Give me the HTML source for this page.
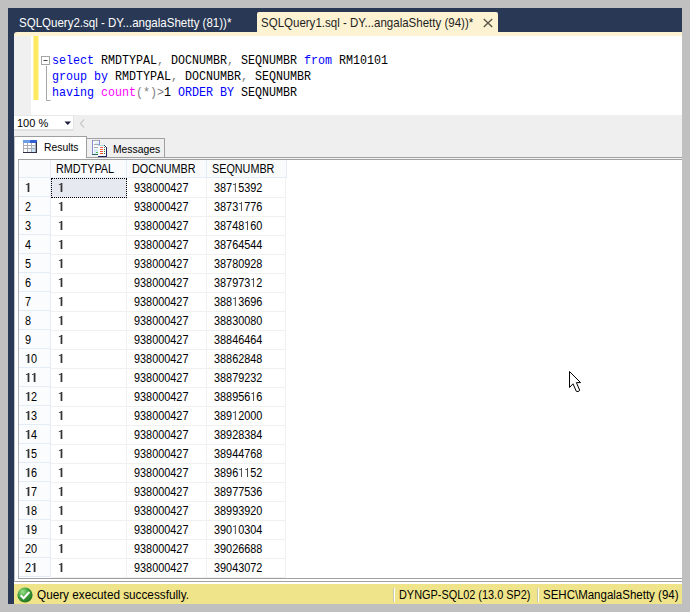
<!DOCTYPE html>
<html><head><meta charset="utf-8">
<style>
*{margin:0;padding:0;box-sizing:border-box}
html,body{width:690px;height:612px;overflow:hidden;background:#c0c0c0;font-family:"Liberation Sans",sans-serif}
.abs{position:absolute}
#win{position:absolute;left:8px;top:8px;width:674px;height:596px;background:#293955}
.tabtxt{font-size:12.4px;transform-origin:0 0;white-space:nowrap;line-height:14px}
#tab1{left:19px;top:16px;transform:scaleX(0.93);color:#fff}
#tab2{left:257px;top:12px;width:241px;height:20px;background:#fdf3d3;border-radius:2px 2px 0 0}
#tab2 .tabtxt{position:absolute;left:4px;top:4px;transform:scaleX(0.929);color:#1e1e1e}
#cream{left:14px;top:32px;width:668px;height:4px;background:#fdf3d3;border-radius:3px 0 0 0}
#editor{left:14px;top:36px;width:668px;height:79px;background:#fff}
#margin{left:14px;top:36px;width:17px;height:79px;background:#f0f0f0}
#chg{left:33px;top:36px;width:6px;height:64px;background:linear-gradient(to right,#fff2a0 0,#fff2a0 1px,#ffe862 1px,#ffe862 4px,#ffec5c 4px,#ffec5c 5px,#fff6b8 5px)}
.code{font-family:"Liberation Mono",monospace;font-size:13px;line-height:16px;white-space:pre;transform:scaleX(0.8974);transform-origin:0 0}
.kw{color:#0000ff}.gr{color:#808080}.fn{color:#ff00ff}
#gray{left:14px;top:115px;width:668px;height:469px;background:#efefef}
#zoom{left:14px;top:115px;width:60px;height:14px;background:#fff;border-top:1px solid #e8e8e8;border-right:1px solid #e4e4e4}
#zoomsh{left:14px;top:129px;width:60px;height:2px;background:#e2e2e2}
#panel{left:14px;top:157px;width:668px;height:425px;background:#fff;border-left:1px solid #c4c4c4;border-bottom:1px solid #a0a0a0}
#tabline{left:86px;top:157px;width:596px;height:1px;background:#a0a0a0;border-bottom:1px solid #f4f4f4;box-sizing:content-box}
#gridbox{left:18px;top:159px;width:664px;height:420px;border-left:1px solid #aeaeb4;border-top:1px solid #a0a0a4;border-bottom:1px solid #a0a0a4;background:#fff}
#restab{left:14px;top:136px;width:73px;height:23px;background:#fff;border:1px solid #a0a0a0;border-left-color:#c4c4c4;border-bottom:none}
#msgtab{left:86px;top:138px;width:79px;height:19px;background:#f0f0f0;border:1px solid #a0a0a0;border-bottom:none}
.gt{font-size:11px;line-height:13px;white-space:nowrap;color:#000}
.gh{font-size:12px;line-height:14px;transform:scaleX(0.90);transform-origin:0 0}
.gd{font-size:12.5px;line-height:14px;transform:scaleX(0.87);transform-origin:0 0}
.o{display:inline-block;width:0.556em;height:9px;position:relative;vertical-align:baseline}
.o::before{content:'';position:absolute;left:3.45px;bottom:0;width:1.15px;height:9px;background:#333}
.o::after{content:'';position:absolute;left:1.15px;top:1px;width:2.4px;height:1px;background:#555}
#status{left:14px;top:584px;width:668px;height:20px;background:#efe48a}
.st{font-size:12.5px;transform-origin:0 0;line-height:14px;white-space:nowrap;color:#000;position:absolute;top:3px}
</style></head><body>
<div id="win"></div>
<div class="abs tabtxt" id="tab1">SQLQuery2.sql - DY...angalaShetty (81))*</div>
<div class="abs" id="tab2"><div class="tabtxt">SQLQuery1.sql - DY...angalaShetty (94))*</div>
<svg class="abs" style="left:226px;top:6px" width="10" height="10" viewBox="0 0 10 10"><path d="M0.8 1L9.2 8.9M9.2 1L0.8 8.9" stroke="#5a5548" stroke-width="1.4"/></svg></div>
<div class="abs" id="cream"></div>
<div class="abs" id="editor"></div>
<div class="abs" id="margin"></div>
<div class="abs" id="chg"></div>
<svg class="abs" style="left:40px;top:55px" width="12" height="46" viewBox="0 0 12 46">
<rect x="1.5" y="1.5" width="8" height="8" fill="#fff" stroke="#a5a5a5"/>
<path d="M3.5 5.5H7.5" stroke="#444"/>
<path d="M6.5 11V45.5H10.5" fill="none" stroke="#a5a5a5"/>
</svg>
<div class="abs code" style="left:52px;top:53px"><span class="kw">select</span> RMDTYPAL<span class="gr">,</span> DOCNUMBR<span class="gr">,</span> SEQNUMBR <span class="kw">from</span> RM10101
<span class="kw">group</span> <span class="kw">by</span> RMDTYPAL<span class="gr">,</span> DOCNUMBR<span class="gr">,</span> SEQNUMBR
<span class="kw">having</span> <span class="fn">count</span><span class="gr">(*)&gt;</span>1 <span class="kw">ORDER</span> <span class="kw">BY</span> SEQNUMBR</div>
<div class="abs" id="gray"></div>
<div class="abs" id="zoom"></div>
<div class="abs" id="zoomsh"></div>
<div class="abs gt" style="left:17px;top:117px">100 %</div>
<svg class="abs" style="left:64px;top:121px" width="8" height="5"><path d="M0.5 0.5H7L3.75 4z" fill="#1e1e3c"/></svg>
<svg class="abs" style="left:79px;top:119px" width="7" height="9"><path d="M5 0.5L1.5 4.5L5 8.5" fill="none" stroke="#c8c8c8" stroke-width="1.2"/></svg>
<div class="abs" id="panel"></div>
<div class="abs" id="gridbox"></div>
<div class="abs" id="restab"></div>
<div class="abs" id="msgtab"></div>
<div class="abs" id="tabline"></div>
<div class="abs gt" style="left:44px;top:141px;font-size:11px;transform:scaleX(0.94);transform-origin:0 0">Results</div>
<div class="abs gt" style="left:113px;top:143px;font-size:11px;transform:scaleX(0.94);transform-origin:0 0">Messages</div>
<svg class="abs" style="left:23px;top:140px" width="14" height="13" viewBox="0 0 14 13" shape-rendering="crispEdges">
<rect x="0" y="0" width="14" height="13" fill="#acacb4"/>
<rect x="0" y="0" width="7" height="3" fill="#6d9de6"/><rect x="7" y="0" width="7" height="3" fill="#2f5fd2"/>
<rect x="1" y="3" width="3" height="2" fill="#fff"/><rect x="5" y="3" width="3" height="2" fill="#fff"/><rect x="9" y="3" width="3" height="2" fill="#fff"/>
<rect x="1" y="6" width="3" height="2" fill="#fff"/><rect x="5" y="6" width="3" height="2" fill="#fff"/><rect x="9" y="6" width="3" height="2" fill="#d8ecfa"/>
<rect x="1" y="9" width="3" height="3" fill="#fff"/><rect x="5" y="9" width="3" height="3" fill="#eef6fc"/><rect x="9" y="9" width="3" height="3" fill="#c8e4f8"/>
<rect x="13" y="2" width="1" height="11" fill="#303048"/><rect x="0" y="12" width="14" height="1" fill="#303048"/>
</svg>
<svg class="abs" style="left:92px;top:140px" width="16" height="18" viewBox="0 0 16 18" shape-rendering="crispEdges">
<rect x="0" y="0" width="8" height="15" fill="#8a8ad0"/>
<rect x="1" y="0" width="6" height="1" fill="#a8a8a8"/>
<rect x="1" y="1" width="6" height="13" fill="#f6fafd"/>
<rect x="3" y="2" width="4" height="2" fill="#dff0fa"/>
<rect x="2" y="4" width="5" height="1" fill="#a8a8b0"/><rect x="2" y="7" width="5" height="1" fill="#a8a8b0"/>
<rect x="2" y="9" width="5" height="5" fill="#d8ecf8"/>
<rect x="4" y="12" width="2" height="1" fill="#50c040"/>
<rect x="0" y="14" width="8" height="1" fill="#306868"/>
<rect x="6" y="5" width="9" height="12" fill="#fff"/>
<rect x="6" y="5" width="6" height="1" fill="#a8dcd8"/>
<rect x="12" y="5" width="1" height="1" fill="#30307a"/><rect x="13" y="6" width="1" height="1" fill="#30307a"/>
<rect x="14" y="7" width="1" height="10" fill="#22226a"/>
<rect x="6" y="16" width="9" height="1" fill="#22226a"/>
<rect x="8" y="7" width="3" height="1" fill="#f06060"/><rect x="12" y="7" width="1" height="1" fill="#509a40"/>
<rect x="8" y="9" width="3" height="1" fill="#f07040"/><rect x="12" y="9" width="1" height="1" fill="#3a8a2a"/>
<rect x="8" y="11" width="3" height="1" fill="#f05050"/><rect x="12" y="11" width="1" height="1" fill="#3a8a2a"/>
<rect x="8" y="13" width="3" height="1" fill="#f05020"/><rect x="12" y="13" width="1" height="1" fill="#2a6a2a"/>
</svg>
<div id="grid">
<div class="abs" style="left:19px;top:160px;width:267px;height:17px;background:#fafbfc"></div>
<div class="abs" style="left:50px;top:160px;width:1px;height:17px;background:#e3ecf7"></div>
<div class="abs" style="left:126px;top:160px;width:1px;height:17px;background:#e3ecf7"></div>
<div class="abs" style="left:206px;top:160px;width:1px;height:17px;background:#e3ecf7"></div>
<div class="abs" style="left:286px;top:160px;width:1px;height:17px;background:#e3ecf7"></div>
<div class="abs" style="left:19px;top:177px;width:268px;height:1px;background:#e3ecf7"></div>
<div class="abs" style="left:19px;top:178px;width:31px;height:399px;background:#fbfcfd"></div>
<div class="abs" style="left:19px;top:196px;width:31px;height:1px;background:#e3ecf7"></div>
<div class="abs" style="left:51px;top:197px;width:235px;height:1px;background:#f0f0f0"></div>
<div class="abs" style="left:19px;top:215px;width:31px;height:1px;background:#e3ecf7"></div>
<div class="abs" style="left:51px;top:216px;width:235px;height:1px;background:#f0f0f0"></div>
<div class="abs" style="left:19px;top:234px;width:31px;height:1px;background:#e3ecf7"></div>
<div class="abs" style="left:51px;top:235px;width:235px;height:1px;background:#f0f0f0"></div>
<div class="abs" style="left:19px;top:253px;width:31px;height:1px;background:#e3ecf7"></div>
<div class="abs" style="left:51px;top:254px;width:235px;height:1px;background:#f0f0f0"></div>
<div class="abs" style="left:19px;top:272px;width:31px;height:1px;background:#e3ecf7"></div>
<div class="abs" style="left:51px;top:273px;width:235px;height:1px;background:#f0f0f0"></div>
<div class="abs" style="left:19px;top:291px;width:31px;height:1px;background:#e3ecf7"></div>
<div class="abs" style="left:51px;top:292px;width:235px;height:1px;background:#f0f0f0"></div>
<div class="abs" style="left:19px;top:310px;width:31px;height:1px;background:#e3ecf7"></div>
<div class="abs" style="left:51px;top:311px;width:235px;height:1px;background:#f0f0f0"></div>
<div class="abs" style="left:19px;top:329px;width:31px;height:1px;background:#e3ecf7"></div>
<div class="abs" style="left:51px;top:330px;width:235px;height:1px;background:#f0f0f0"></div>
<div class="abs" style="left:19px;top:348px;width:31px;height:1px;background:#e3ecf7"></div>
<div class="abs" style="left:51px;top:349px;width:235px;height:1px;background:#f0f0f0"></div>
<div class="abs" style="left:19px;top:367px;width:31px;height:1px;background:#e3ecf7"></div>
<div class="abs" style="left:51px;top:368px;width:235px;height:1px;background:#f0f0f0"></div>
<div class="abs" style="left:19px;top:386px;width:31px;height:1px;background:#e3ecf7"></div>
<div class="abs" style="left:51px;top:387px;width:235px;height:1px;background:#f0f0f0"></div>
<div class="abs" style="left:19px;top:405px;width:31px;height:1px;background:#e3ecf7"></div>
<div class="abs" style="left:51px;top:406px;width:235px;height:1px;background:#f0f0f0"></div>
<div class="abs" style="left:19px;top:424px;width:31px;height:1px;background:#e3ecf7"></div>
<div class="abs" style="left:51px;top:425px;width:235px;height:1px;background:#f0f0f0"></div>
<div class="abs" style="left:19px;top:443px;width:31px;height:1px;background:#e3ecf7"></div>
<div class="abs" style="left:51px;top:444px;width:235px;height:1px;background:#f0f0f0"></div>
<div class="abs" style="left:19px;top:462px;width:31px;height:1px;background:#e3ecf7"></div>
<div class="abs" style="left:51px;top:463px;width:235px;height:1px;background:#f0f0f0"></div>
<div class="abs" style="left:19px;top:481px;width:31px;height:1px;background:#e3ecf7"></div>
<div class="abs" style="left:51px;top:482px;width:235px;height:1px;background:#f0f0f0"></div>
<div class="abs" style="left:19px;top:500px;width:31px;height:1px;background:#e3ecf7"></div>
<div class="abs" style="left:51px;top:501px;width:235px;height:1px;background:#f0f0f0"></div>
<div class="abs" style="left:19px;top:519px;width:31px;height:1px;background:#e3ecf7"></div>
<div class="abs" style="left:51px;top:520px;width:235px;height:1px;background:#f0f0f0"></div>
<div class="abs" style="left:19px;top:538px;width:31px;height:1px;background:#e3ecf7"></div>
<div class="abs" style="left:51px;top:539px;width:235px;height:1px;background:#f0f0f0"></div>
<div class="abs" style="left:19px;top:557px;width:31px;height:1px;background:#e3ecf7"></div>
<div class="abs" style="left:51px;top:558px;width:235px;height:1px;background:#f0f0f0"></div>
<div class="abs" style="left:19px;top:576px;width:31px;height:1px;background:#e3ecf7"></div>
<div class="abs" style="left:51px;top:577px;width:235px;height:1px;background:#f0f0f0"></div>
<div class="abs" style="left:50px;top:178px;width:1px;height:399px;background:#e3ecf7"></div>
<div class="abs" style="left:126px;top:178px;width:1px;height:399px;background:#f0f0f0"></div>
<div class="abs" style="left:206px;top:178px;width:1px;height:399px;background:#f0f0f0"></div>
<div class="abs" style="left:285px;top:178px;width:1px;height:399px;background:#f0f0f0"></div>
<div class="abs" style="left:51px;top:178px;width:76px;height:20px;background:#e6eaf0;border:1px dotted #000"></div>
<div class="abs gt gh" style="left:56px;top:162px">RMDTYPAL</div>
<div class="abs gt gh" style="left:132px;top:162px">DOCNUMBR</div>
<div class="abs gt gh" style="left:212px;top:162px">SEQNUMBR</div>
<div class="abs gt gd" style="left:25px;top:181px"><span class="o"></span></div>
<div class="abs gt gd" style="left:58px;top:181px"><span class="o"></span></div>
<div class="abs gt gd" style="left:134px;top:181px">938000427</div>
<div class="abs gt gd" style="left:214px;top:181px">387<span class="o"></span>5392</div>
<div class="abs gt gd" style="left:25px;top:200px">2</div>
<div class="abs gt gd" style="left:58px;top:200px"><span class="o"></span></div>
<div class="abs gt gd" style="left:134px;top:200px">938000427</div>
<div class="abs gt gd" style="left:214px;top:200px">3873<span class="o"></span>776</div>
<div class="abs gt gd" style="left:25px;top:219px">3</div>
<div class="abs gt gd" style="left:58px;top:219px"><span class="o"></span></div>
<div class="abs gt gd" style="left:134px;top:219px">938000427</div>
<div class="abs gt gd" style="left:214px;top:219px">38748<span class="o"></span>60</div>
<div class="abs gt gd" style="left:25px;top:238px">4</div>
<div class="abs gt gd" style="left:58px;top:238px"><span class="o"></span></div>
<div class="abs gt gd" style="left:134px;top:238px">938000427</div>
<div class="abs gt gd" style="left:214px;top:238px">38764544</div>
<div class="abs gt gd" style="left:25px;top:257px">5</div>
<div class="abs gt gd" style="left:58px;top:257px"><span class="o"></span></div>
<div class="abs gt gd" style="left:134px;top:257px">938000427</div>
<div class="abs gt gd" style="left:214px;top:257px">38780928</div>
<div class="abs gt gd" style="left:25px;top:276px">6</div>
<div class="abs gt gd" style="left:58px;top:276px"><span class="o"></span></div>
<div class="abs gt gd" style="left:134px;top:276px">938000427</div>
<div class="abs gt gd" style="left:214px;top:276px">387973<span class="o"></span>2</div>
<div class="abs gt gd" style="left:25px;top:295px">7</div>
<div class="abs gt gd" style="left:58px;top:295px"><span class="o"></span></div>
<div class="abs gt gd" style="left:134px;top:295px">938000427</div>
<div class="abs gt gd" style="left:214px;top:295px">388<span class="o"></span>3696</div>
<div class="abs gt gd" style="left:25px;top:314px">8</div>
<div class="abs gt gd" style="left:58px;top:314px"><span class="o"></span></div>
<div class="abs gt gd" style="left:134px;top:314px">938000427</div>
<div class="abs gt gd" style="left:214px;top:314px">38830080</div>
<div class="abs gt gd" style="left:25px;top:333px">9</div>
<div class="abs gt gd" style="left:58px;top:333px"><span class="o"></span></div>
<div class="abs gt gd" style="left:134px;top:333px">938000427</div>
<div class="abs gt gd" style="left:214px;top:333px">38846464</div>
<div class="abs gt gd" style="left:25px;top:352px"><span class="o"></span>0</div>
<div class="abs gt gd" style="left:58px;top:352px"><span class="o"></span></div>
<div class="abs gt gd" style="left:134px;top:352px">938000427</div>
<div class="abs gt gd" style="left:214px;top:352px">38862848</div>
<div class="abs gt gd" style="left:25px;top:371px"><span class="o"></span><span class="o"></span></div>
<div class="abs gt gd" style="left:58px;top:371px"><span class="o"></span></div>
<div class="abs gt gd" style="left:134px;top:371px">938000427</div>
<div class="abs gt gd" style="left:214px;top:371px">38879232</div>
<div class="abs gt gd" style="left:25px;top:390px"><span class="o"></span>2</div>
<div class="abs gt gd" style="left:58px;top:390px"><span class="o"></span></div>
<div class="abs gt gd" style="left:134px;top:390px">938000427</div>
<div class="abs gt gd" style="left:214px;top:390px">388956<span class="o"></span>6</div>
<div class="abs gt gd" style="left:25px;top:409px"><span class="o"></span>3</div>
<div class="abs gt gd" style="left:58px;top:409px"><span class="o"></span></div>
<div class="abs gt gd" style="left:134px;top:409px">938000427</div>
<div class="abs gt gd" style="left:214px;top:409px">389<span class="o"></span>2000</div>
<div class="abs gt gd" style="left:25px;top:428px"><span class="o"></span>4</div>
<div class="abs gt gd" style="left:58px;top:428px"><span class="o"></span></div>
<div class="abs gt gd" style="left:134px;top:428px">938000427</div>
<div class="abs gt gd" style="left:214px;top:428px">38928384</div>
<div class="abs gt gd" style="left:25px;top:447px"><span class="o"></span>5</div>
<div class="abs gt gd" style="left:58px;top:447px"><span class="o"></span></div>
<div class="abs gt gd" style="left:134px;top:447px">938000427</div>
<div class="abs gt gd" style="left:214px;top:447px">38944768</div>
<div class="abs gt gd" style="left:25px;top:466px"><span class="o"></span>6</div>
<div class="abs gt gd" style="left:58px;top:466px"><span class="o"></span></div>
<div class="abs gt gd" style="left:134px;top:466px">938000427</div>
<div class="abs gt gd" style="left:214px;top:466px">3896<span class="o"></span><span class="o"></span>52</div>
<div class="abs gt gd" style="left:25px;top:485px"><span class="o"></span>7</div>
<div class="abs gt gd" style="left:58px;top:485px"><span class="o"></span></div>
<div class="abs gt gd" style="left:134px;top:485px">938000427</div>
<div class="abs gt gd" style="left:214px;top:485px">38977536</div>
<div class="abs gt gd" style="left:25px;top:504px"><span class="o"></span>8</div>
<div class="abs gt gd" style="left:58px;top:504px"><span class="o"></span></div>
<div class="abs gt gd" style="left:134px;top:504px">938000427</div>
<div class="abs gt gd" style="left:214px;top:504px">38993920</div>
<div class="abs gt gd" style="left:25px;top:523px"><span class="o"></span>9</div>
<div class="abs gt gd" style="left:58px;top:523px"><span class="o"></span></div>
<div class="abs gt gd" style="left:134px;top:523px">938000427</div>
<div class="abs gt gd" style="left:214px;top:523px">390<span class="o"></span>0304</div>
<div class="abs gt gd" style="left:25px;top:542px">20</div>
<div class="abs gt gd" style="left:58px;top:542px"><span class="o"></span></div>
<div class="abs gt gd" style="left:134px;top:542px">938000427</div>
<div class="abs gt gd" style="left:214px;top:542px">39026688</div>
<div class="abs gt gd" style="left:25px;top:561px">2<span class="o"></span></div>
<div class="abs gt gd" style="left:58px;top:561px"><span class="o"></span></div>
<div class="abs gt gd" style="left:134px;top:561px">938000427</div>
<div class="abs gt gd" style="left:214px;top:561px">39043072</div>
</div>
<div class="abs" id="status"></div>
<div class="abs" style="left:14px;top:582px;width:668px;height:2px;background:#fff"></div>
<svg class="abs" style="left:17px;top:587px" width="16" height="16" viewBox="0 0 16 16">
<defs><radialGradient id="g1" cx="0.35" cy="0.3" r="0.8"><stop offset="0" stop-color="#9be28a"/><stop offset="0.5" stop-color="#3a9a36"/><stop offset="1" stop-color="#1f6e22"/></radialGradient></defs>
<circle cx="8" cy="8" r="7.6" fill="url(#g1)"/>
<path d="M3.6 8.3L6.6 11.3L12.4 5" fill="none" stroke="#fff" stroke-width="2"/>
</svg>
<div class="st" style="left:37px;top:588px;transform:scaleX(0.94)">Query executed successfully.</div>
<div class="abs" style="left:393px;top:588px;width:1px;height:14px;background:#c8c8b0"></div>
<div class="abs" style="left:394px;top:588px;width:1px;height:14px;background:#fff"></div>
<div class="st" style="left:399px;top:588px;transform:scaleX(0.872)">DYNGP-SQL02 (13.0 SP2)</div>
<div class="abs" style="left:537px;top:588px;width:1px;height:14px;background:#c8c8b0"></div>
<div class="abs" style="left:538px;top:588px;width:1px;height:14px;background:#fff"></div>
<div class="st" style="left:543px;top:588px;transform:scaleX(0.92)">SEHC\MangalaShetty (94)</div>
<svg class="abs" style="left:569px;top:371px" width="13" height="23" viewBox="0 0 13 23">
<path d="M0.5 0.5V16.5L4 12.8L7.3 20.3L9.6 20.6L10.6 19L7.4 11.6H11.6Z" fill="#fff" stroke="#000" stroke-width="1" shape-rendering="auto"/>
</svg>
</body></html>
